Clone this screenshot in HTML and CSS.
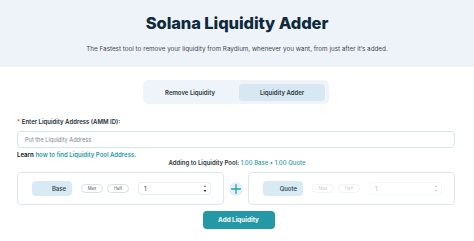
FILE: index.html
```html
<!DOCTYPE html>
<html>
<head>
<meta charset="utf-8">
<link rel="stylesheet" href="styles.css">
</head>
<body>
<header class="hero">
  <h1 class="title">Solana Liquidity Adder</h1>
  <p class="subtitle">The Fastest tool to remove your liquidity from Raydium, whenever you want, from just after it’s added.</p>
</header>
<main class="main">
  <div class="tabs">
    <div class="tab">Remove Liquidity</div>
    <div class="tab active">Liquidity Adder</div>
  </div>
  <div class="form">
    <label class="label"><span class="req">*</span> Enter Liquidity Address (AMM ID):</label>
    <div class="addr">Put the Liquidity Address</div>
    <p class="learn"><b>Learn</b> <span class="link">how to find Liquidity Pool Address.</span></p>
    <p class="adding">Adding to Liquidity Pool: <span class="link">1.00 Base • 1.00 Quote</span></p>
    <div class="pair">
      <div class="card">
        <div class="token">Base</div>
        <div class="chip">Max</div>
        <div class="chip">Half</div>
        <div class="num"><span>1</span>
          <svg class="spin" width="4" height="9" viewBox="0 0 4 9"><path d="M2 1 L3.5 3 L0.5 3 Z" fill="#8a9299"/><path d="M2 8 L3.5 6 L0.5 6 Z" fill="#2a2f33"/></svg>
        </div>
      </div>
      <div class="plus">
        <svg width="14" height="14" viewBox="0 0 14 14"><circle cx="7" cy="7" r="7" fill="#e3f0f5"/><path d="M7 2.6 V11.4 M2.6 7 H11.4" stroke="#2a9fae" stroke-width="1.3" stroke-linecap="round"/></svg>
      </div>
      <div class="card">
        <div class="token">Quote</div>
        <div class="chip dim">Max</div>
        <div class="chip dim">Half</div>
        <div class="num dim"><span>1</span>
          <svg class="spin" width="4" height="9" viewBox="0 0 4 9"><path d="M2 1 L3.5 3 L0.5 3 Z" fill="#8a9299"/><path d="M2 8 L3.5 6 L0.5 6 Z" fill="#8a9299"/></svg>
        </div>
      </div>
    </div>
    <div class="actions"><button class="add">Add Liquidity</button></div>
  </div>
</main>
</body>
</html>
```
FILE: styles.css
```css
* { box-sizing: border-box; }
html, body { margin: 0; padding: 0; background: #ffffff; }
body { font-family: "Inter", "Noto Sans", sans-serif; color: #1d2b35; width: 474px; height: 241px; overflow: hidden; }

.hero { background: #eef3fa; height: 67px; padding-top: 12px; text-align: center; }
.title { margin: 0; font-size: 16.5px; line-height: 22px; font-weight: 800; color: #0f2a3b; letter-spacing: -0.1px; }
.subtitle { margin: 10px 0 0; font-size: 6.3px; line-height: 10px; color: #3d4851; }

.main { padding-top: 13px; }
.tabs { width: 186px; margin: 0 auto 0 143px; background: #eef4fa; border-radius: 5px; padding: 4px 4px 3px; display: flex; gap: 6px; height: 24px; }
.tab { flex: 1; display: flex; align-items: center; justify-content: center; font-size: 6px; font-weight: 600; color: #2a3640; border-radius: 4px; }
.tab.active { background: #d7e8f3; }

.form { padding: 13px 19px 0 17px; }
.label { display: block; font-size: 6px; line-height: 10px; font-weight: 600; color: #25313a; }
.req { color: #e0443c; }
.addr { margin-top: 4px; height: 17px; border: 1px solid #d3e6e8; border-radius: 4px; padding-left: 7px; display: flex; align-items: center; font-size: 5.6px; color: #7d868d; }
.learn { margin: 3px 0 0; font-size: 6px; line-height: 8px; color: #1d2b35; }
.learn b { font-weight: 700; }
.link { color: #2a9aa8; font-weight: 600; }
.adding { margin: 0; text-align: center; font-size: 6px; line-height: 8px; font-weight: 600; color: #2b3740; padding-left: 2px; }
.adding .link { font-weight: 500; }

.pair { margin-top: 5px; display: flex; align-items: center; gap: 5px; }
.card { width: 207px; height: 33px; border: 1px solid #dfe7ec; border-radius: 4px; display: flex; align-items: center; padding-left: 14px; }
.plus { width: 14px; height: 14px; display: flex; }
.plus svg { display: block; }
.token { width: 40px; height: 15px; background: #d8ebf4; border-radius: 4px; display: flex; align-items: center; justify-content: flex-end; padding-right: 6px; font-size: 6px; font-weight: 500; color: #2a3640; }
.chip { width: 22px; height: 9px; border: 1px solid #d9e0e4; border-radius: 5px; display: flex; align-items: center; justify-content: center; font-size: 4.2px; color: #56606a; margin-left: 4px; }
.chip:first-of-type { margin-left: 9px; }
.token + .chip { margin-left: 9px; }
.chip.dim, .num.dim { opacity: 0.35; }
.num { margin-left: 9px; width: 73px; height: 13px; border: 1px solid #e8eef1; border-radius: 3px; display: flex; align-items: center; justify-content: space-between; padding: 0 3px 0 5px; font-size: 6px; color: #2a3640; }
.spin { display: block; }

.actions { margin-top: 6px; display: flex; justify-content: center; padding-left: 0; }
.add { width: 72px; height: 18px; margin-left: 5px; border: none; border-radius: 4px; background: #2598a7; color: #ffffff; font-family: inherit; font-size: 6.3px; font-weight: 700; padding: 0; }
```
